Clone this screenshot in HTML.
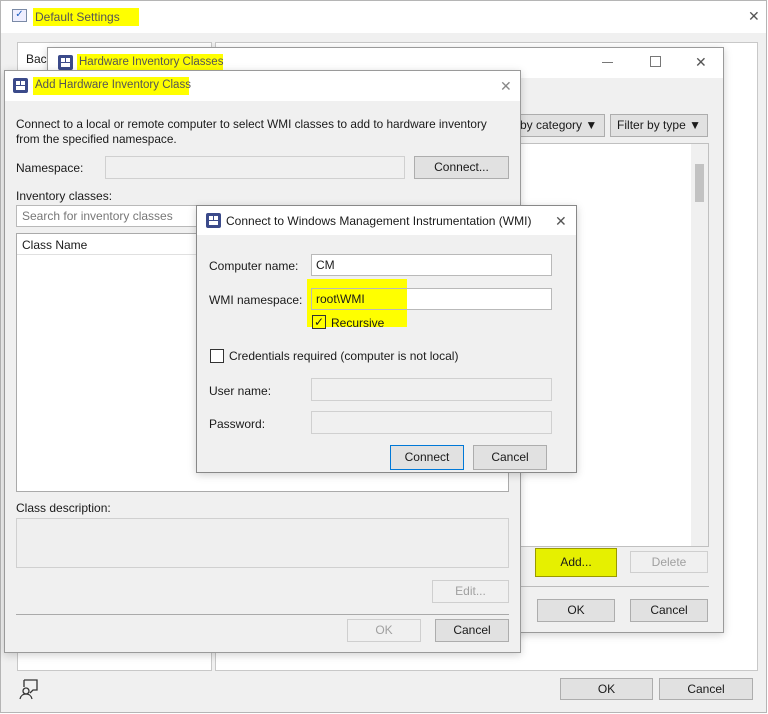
<!DOCTYPE html>
<html><head><meta charset="utf-8"><style>
*{box-sizing:border-box}
body{margin:0;width:768px;height:714px;position:relative;overflow:hidden;background:#fff;font-family:"Liberation Sans",sans-serif;font-size:12px;color:#1a1a1a}
.a{position:absolute;white-space:nowrap}
.win{position:absolute;border:1px solid #9a9a9a;background:#f0f0f0;box-shadow:0 2px 8px rgba(0,0,0,.18)}
.tb{position:absolute;left:0;right:0;top:0;background:#fff}
.btn{position:absolute;background:#e1e1e1;border:1px solid #adadad;text-align:center;font-size:12px;white-space:nowrap}
.dis{background:#f0f0f0;border-color:#cfcfcf;color:#a0a0a0}
.inp{position:absolute;background:#fff;border:1px solid #b9b9b9;white-space:nowrap}
.ro{background:#f0f0f0;border-color:#d0d0d0}
.hl{background:#ffff00}
.ico{position:absolute;width:15px;height:15px;background:#3b4a8a;border-radius:2px}
.ico:after{content:"";position:absolute;left:3px;top:3px;width:9px;height:9px;background:linear-gradient(#fff,#fff) 0 0/4px 4px no-repeat,linear-gradient(#fff,#fff) 5px 0/4px 4px no-repeat,linear-gradient(#fff,#fff) 0 5px/9px 4px no-repeat}
.x{position:absolute;font-size:14px;color:#555;line-height:1}
</style></head><body>
<div class="a" style="left:0;top:0;width:767px;height:713px;border:1px solid #b5b5b5;background:#f0f0f0"></div>
<div class="a" style="left:1px;top:1px;width:765px;height:32px;background:#fff"></div>
<div class="a" style="left:12px;top:9px;width:15px;height:13px;border:1px solid #7a8aa6;background:#eef;font-size:10px;color:#2060c0;line-height:10px;text-align:center">✓</div>
<div class="a hl" style="left:33px;top:8px;width:106px;height:18px;padding:2px 2px;font-size:12px;color:#555">Default Settings</div>
<div class="x" style="left:748px;top:9px">✕</div>
<div class="a" style="left:17px;top:42px;width:195px;height:629px;background:#fff;border:1px solid #c8c8c8"></div>
<div class="a" style="left:26px;top:52px">Back</div>
<div class="a" style="left:215px;top:42px;width:543px;height:629px;background:#fff;border:1px solid #c8c8c8"></div>
<svg class="a" style="left:18px;top:677px" width="22" height="24"><path d="M6 3h13v10h-4l-3 3M6 3v7" fill="none" stroke="#333" stroke-width="1.3"/><circle cx="8" cy="14" r="3" fill="none" stroke="#333" stroke-width="1.3"/><path d="M2 22c1-4 3-5 6-5s5 1 6 5" fill="none" stroke="#333" stroke-width="1.3"/></svg>
<div class="btn" style="left:560px;top:678px;width:93px;height:22px;line-height:20px">OK</div>
<div class="btn" style="left:659px;top:678px;width:94px;height:22px;line-height:20px">Cancel</div>

<div class="win" style="left:47px;top:47px;width:677px;height:586px">
<div class="tb" style="height:30px"></div>
<div class="ico" style="left:10px;top:7px"></div>
<div class="a hl" style="left:29px;top:6px;width:146px;height:18px;padding:2px;font-size:11.5px;color:#555">Hardware Inventory Classes</div>
<div class="a" style="left:554px;top:14px;width:11px;height:1px;background:#777"></div>
<div class="a" style="left:602px;top:8px;width:11px;height:11px;border:1px solid #777"></div>
<div class="x" style="left:647px;top:7px">✕</div>
<div class="btn" style="left:467px;top:66px;width:90px;height:23px;line-height:21px;text-align:left;padding-left:4px">by category ▼</div>
<div class="btn" style="left:562px;top:66px;width:98px;height:23px;line-height:21px">Filter by type ▼</div>
<div class="a" style="left:467px;top:95px;width:194px;height:404px;background:#fff;border:1px solid #c0c0c0"></div>
<div class="a" style="left:643px;top:96px;width:17px;height:402px;background:#f0f0f0"></div>
<div class="a" style="left:647px;top:116px;width:9px;height:38px;background:#c2c2c2"></div>
<div class="btn" style="left:487px;top:500px;width:82px;height:29px;line-height:27px;border-color:#9a9a00;background:#e6f000">Add...</div>
<div class="btn dis" style="left:582px;top:503px;width:78px;height:22px;line-height:20px">Delete</div>
<div class="a" style="left:467px;top:538px;width:194px;height:1px;background:#bbb"></div>
<div class="btn" style="left:489px;top:551px;width:78px;height:23px;line-height:21px">OK</div>
<div class="btn" style="left:582px;top:551px;width:78px;height:23px;line-height:21px">Cancel</div>
</div>

<div class="win" style="left:4px;top:70px;width:517px;height:583px">
<div class="tb" style="height:30px"></div>
<div class="ico" style="left:8px;top:7px"></div>
<div class="a hl" style="left:28px;top:6px;width:156px;height:18px;padding:2px;font-size:11.5px;color:#555">Add Hardware Inventory Class</div>
<div class="x" style="left:495px;top:8px;color:#888">✕</div>
<div class="a" style="left:11px;top:46px;line-height:15px;font-size:11.8px">Connect to a local or remote computer to select WMI classes to add to hardware inventory<br>from the specified namespace.</div>
<div class="a" style="left:11px;top:90px">Namespace:</div>
<div class="inp ro" style="left:100px;top:85px;width:300px;height:23px"></div>
<div class="btn" style="left:409px;top:85px;width:95px;height:23px;line-height:21px">Connect...</div>
<div class="a" style="left:11px;top:118px">Inventory classes:</div>
<div class="inp" style="left:11px;top:134px;width:190px;height:22px;color:#777;padding:3px 5px">Search for inventory classes</div>
<div class="inp" style="left:11px;top:162px;width:493px;height:259px;border-color:#aaa"></div>
<div class="a" style="left:17px;top:167px">Class Name</div>
<div class="a" style="left:12px;top:183px;width:190px;height:1px;background:#e0e0e0"></div>
<div class="a" style="left:11px;top:430px">Class description:</div>
<div class="inp ro" style="left:11px;top:447px;width:493px;height:50px;background:#efefef"></div>
<div class="btn dis" style="left:427px;top:509px;width:77px;height:23px;line-height:21px">Edit...</div>
<div class="a" style="left:11px;top:543px;width:493px;height:1px;background:#aaa"></div>
<div class="btn dis" style="left:342px;top:548px;width:74px;height:23px;line-height:21px">OK</div>
<div class="btn" style="left:430px;top:548px;width:74px;height:23px;line-height:21px">Cancel</div>
</div>

<div class="win" style="left:196px;top:205px;width:381px;height:268px;border-color:#888">
<div class="tb" style="height:29px"></div>
<div class="ico" style="left:9px;top:7px"></div>
<div class="a" style="left:29px;top:8px;font-size:12px">Connect to Windows Management Instrumentation (WMI)</div>
<div class="x" style="left:358px;top:8px">✕</div>
<div class="a" style="left:12px;top:53px">Computer name:</div>
<div class="inp" style="left:114px;top:48px;width:241px;height:22px;padding:3px 4px">CM</div>
<div class="a hl" style="left:110px;top:73px;width:100px;height:48px"></div>
<div class="a" style="left:12px;top:87px">WMI namespace:</div>
<div class="inp" style="left:114px;top:82px;width:241px;height:22px;padding:3px 4px;background:linear-gradient(90deg,#ffff00 95px,#fff 95px)">root\WMI</div>
<div class="a" style="left:115px;top:109px;width:14px;height:14px;border:1px solid #333;background:#ffff00;font-size:12px;line-height:12px;text-align:center">✓</div>
<div class="a" style="left:134px;top:110px">Recursive</div>
<div class="a" style="left:13px;top:143px;width:14px;height:14px;border:1px solid #333;background:#fff"></div>
<div class="a" style="left:32px;top:143px">Credentials required (computer is not local)</div>
<div class="a" style="left:12px;top:178px">User name:</div>
<div class="inp ro" style="left:114px;top:172px;width:241px;height:23px"></div>
<div class="a" style="left:12px;top:211px">Password:</div>
<div class="inp ro" style="left:114px;top:205px;width:241px;height:23px"></div>
<div class="btn" style="left:193px;top:239px;width:74px;height:25px;line-height:23px;border-color:#0078d7">Connect</div>
<div class="btn" style="left:276px;top:239px;width:74px;height:25px;line-height:23px">Cancel</div>
</div>
</body></html>
